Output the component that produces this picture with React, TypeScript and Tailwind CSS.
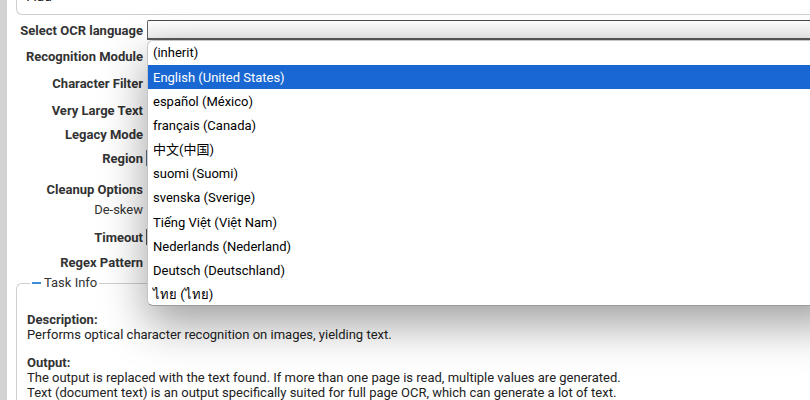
import React from "react";

const rows: { label: string; mt: number; sliver?: string; normal?: boolean }[] = [
  { label: "Select OCR language", mt: 5 },
  { label: "Recognition Module", mt: 6 },
  { label: "Character Filter", mt: 7 },
  { label: "Very Large Text", mt: 7 },
  { label: "Legacy Mode", mt: 4 },
  { label: "Region", mt: 4, sliver: "blue" },
  { label: "Cleanup Options", mt: 11 },
  { label: "De-skew", mt: 0, normal: true },
  { label: "Timeout", mt: 8, sliver: "dark" },
  { label: "Regex Pattern", mt: 5 },
];

const langs = [
  "(inherit)",
  "English (United States)",
  "español (México)",
  "français (Canada)",
  "中文(中国)",
  "suomi (Suomi)",
  "svenska (Sverige)",
  "Tiếng Việt (Việt Nam)",
  "Nederlands (Nederland)",
  "Deutsch (Deutschland)",
  "ไทย (ไทย)",
];

export default function App() {
  return (
    <div className="relative w-[810px] h-[400px] overflow-hidden bg-white flex items-start text-[#222] font-['Roboto','Noto_Sans','Noto_Sans_CJK_SC',sans-serif] text-[13px]">
      <div className="w-[7px] h-[400px] shrink-0 bg-[#d2d2d2]" />
      <div className="w-[860px] shrink-0 pl-[9px] flex flex-col">
        <div className="shrink-0 -mt-[18px] h-[33px] border border-r-0 border-[#cfcfcf] rounded-bl-md pl-[10px] pt-[5px] flex items-start text-[14px] leading-[16px]">
          Add
        </div>
        <div className="shrink-0 flex flex-col">
          {rows.map((r, i) => (
            <div
              key={i}
              className="shrink-0 flex items-center h-[20px]"
              style={{ marginTop: r.mt }}
            >
              <div
                className={
                  r.normal
                    ? "w-[127px] text-right font-normal text-[#333] whitespace-nowrap leading-none"
                    : "w-[127px] text-right font-bold text-[#333] whitespace-nowrap leading-none"
                }
              >
                {r.label}
              </div>
              {i === 0 ? (
                <div className="ml-[4px] flex-1 h-[20px] border-t border-b-2 border-l border-t-[#4a4a4a] border-b-[#5a5a5a] border-l-[#666] rounded-tl-[2px] bg-gradient-to-b from-white to-[#efefef]" />
              ) : r.sliver ? (
                <div
                  className={
                    r.sliver === "blue"
                      ? "ml-[3px] flex-1 h-[16px] border-l-2 border-l-[#5a7390] bg-white"
                      : "ml-[3px] flex-1 h-[16px] border-l-2 border-l-[#555] bg-white"
                  }
                />
              ) : null}
            </div>
          ))}
        </div>
        <fieldset className="shrink-0 mt-[3px] border border-r-0 border-[#cfcfcf] rounded-tl-md pl-[10px] pr-0 pb-4 min-w-0">
          <legend className="ml-[3px] px-[2px] flex items-center text-[13px] text-[#333] leading-[16px]">
            <span className="inline-block w-[9px] h-[2px] bg-[#3b8fd9] mr-[3px]" />
            Task Info
          </legend>
          <div className="mt-[21px] leading-[15px] text-[13px] text-[#222]">
            <div className="font-bold text-[#333]">Description:</div>
            <div>Performs optical character recognition on images, yielding text.</div>
            <div className="font-bold text-[#333] mt-[13px]">Output:</div>
            <div>The output is replaced with the text found. If more than one page is read, multiple values are generated.</div>
            <div>Text (document text) is an output specifically suited for full page OCR, which can generate a lot of text.</div>
          </div>
        </fieldset>
      </div>

      <div className="absolute left-[147px] top-[40px] w-[700px] h-[266px] bg-white border border-[#c6c6c6] border-b-[#9a9a9a] rounded-l-md shadow-[0_18px_45px_rgba(0,0,0,0.38)] flex flex-col">
        {langs.map((l, i) => (
          <div
            key={i}
            className={
              i === 1
                ? "h-[24.2px] shrink-0 flex items-center pl-[5px] bg-[#1967d2] text-white text-[13px]"
                : "h-[24.2px] shrink-0 flex items-center pl-[5px] text-black text-[13px]"
            }
          >
            {l}
          </div>
        ))}
      </div>
    </div>
  );
}
